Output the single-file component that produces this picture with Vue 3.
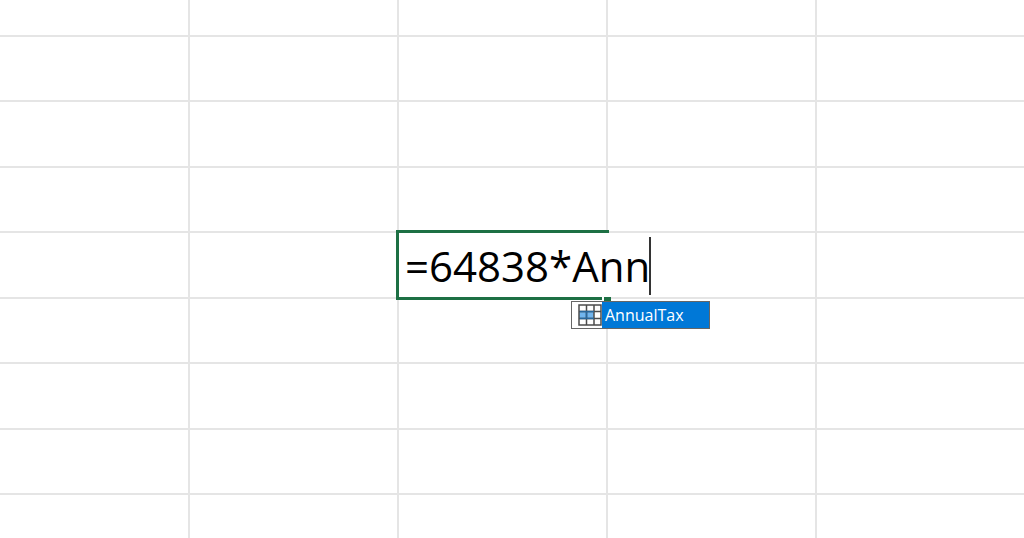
<script setup>
import { ref } from 'vue'

const formula = ref('=64838*Ann')
const rows = 9
const columns = 5
const activeRow = 5
const activeColumn = 3
const isActive = (r, c) => r === activeRow && c === activeColumn
</script>

<template>
  <main class="sheet" role="grid" aria-label="Worksheet">
    <div v-for="r in rows" :key="r" class="row" role="row">
      <div
        v-for="c in columns"
        :key="c"
        class="cell"
        :class="{ active: isActive(r, c) }"
        role="gridcell"
      >
        <template v-if="isActive(r, c)">
          <div class="frame"></div>
          <div class="editor">
            <input v-model="formula" class="formula" type="text" aria-label="Formula" spellcheck="false" autocomplete="off" />
            <span class="caret"></span>
          </div>
          <span class="handle"></span>
          <div class="suggestions" role="listbox" aria-label="Names">
            <svg class="icon" viewBox="0 0 24 22" aria-hidden="true">
              <rect x="1" y="1" width="22" height="20" fill="#fff" />
              <path d="M1 7h15v8H1z" fill="#71b5ee" />
              <path d="M1 1h22v20H1zM1 7.5h22M1 14.5h22M8.5 1v20M16 1v20" fill="none" stroke="#4c4c4c" stroke-width="1.5" />
              <path d="M1.8 7.5H16M1.8 14.5H16M8.5 8v6" fill="none" stroke="#28679c" stroke-width="1.5" />
            </svg>
            <button class="option" type="button" role="option" aria-selected="true">AnnualTax</button>
          </div>
        </template>
      </div>
    </div>
  </main>
</template>

<style>
body {
  margin: 0;
  background: #fff;
}
</style>

<style scoped>
.sheet {
  display: grid;
  grid-template-rows: 37px repeat(7, 1fr) 43px;
  height: 100vh;
  overflow: hidden;
  background: #fff;
}
.row {
  display: grid;
  grid-template-columns: 190px 209px 209px 209px 1fr;
  min-height: 0;
}
.cell {
  box-sizing: border-box;
  min-width: 0;
  border-right: 2px solid #e5e5e5;
  border-bottom: 2px solid #e5e5e5;
}
.cell:last-child {
  border-right: 0;
}
.row:last-child .cell {
  border-bottom: 0;
}
.active {
  position: relative;
  z-index: 1;
  border-right-color: #fff;
}
.frame {
  position: absolute;
  inset: -3px;
  border: 3px solid #1d7044;
  border-right: 0;
}
.editor {
  position: absolute;
  inset: 0 auto 0 0;
  display: flex;
  align-items: flex-start;
  padding-left: 6px;
  background: #fff;
}
.formula {
  box-sizing: border-box;
  width: 246px;
  height: 66px;
  padding: 0;
  border: 0;
  outline: 0;
  background: transparent;
  color: #000;
  font: 42px/66px "Open Sans", "Noto Sans", sans-serif;
  caret-color: transparent;
}
.caret {
  flex: none;
  width: 2px;
  height: 58px;
  margin: 4px 0 0 -2px;
  background: #333;
}
.handle {
  position: absolute;
  right: -5px;
  bottom: -5px;
  width: 7px;
  height: 5px;
  border-left: 2px solid #fff;
  background: #1d7044;
}
.suggestions {
  position: absolute;
  top: calc(100% + 4px);
  left: 172px;
  box-sizing: border-box;
  display: flex;
  width: 139px;
  height: 28px;
  border: 1px solid #666;
  background: #fff;
}
.icon {
  flex: none;
  width: 24px;
  height: 22px;
  margin: 2px 0 0 6px;
}
.option {
  flex: 1;
  padding: 0 0 0 3px;
  border: 0;
  background: #0078d7;
  color: #fff;
  font: 16px/26px "Open Sans", "Noto Sans", sans-serif;
  text-align: left;
}
</style>
